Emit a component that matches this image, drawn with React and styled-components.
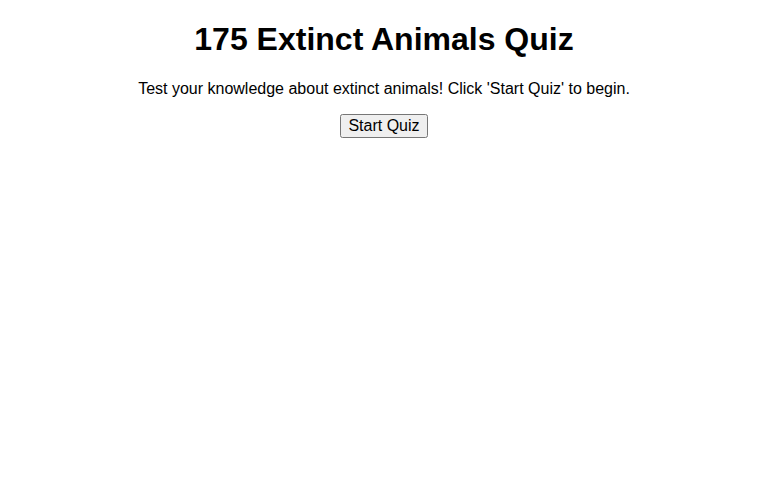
import styled, { createGlobalStyle } from "styled-components"

const GlobalStyle = createGlobalStyle`
	body {
		margin: 0 8px 8px;
		font-family: "Liberation Sans", Arial, sans-serif;
		background: #fff;
		color: #000;
	}
`

const Quiz = styled.div`
	text-align: center;
`

const Title = styled.h1`
	font-size: 2em;
	font-weight: bold;
	margin: 0.67em 0;
`

const Intro = styled.p`
	font-size: 16px;
	margin: 16px 0;
`

const StartButton = styled.button`
	font-family: "Liberation Sans", Arial, sans-serif;
	font-size: 16px;
	color: #000;
	padding: 1px 6px;
`

export default function App() {
	return (
		<>
			<GlobalStyle />
			<Quiz>
				<Title>175 Extinct Animals Quiz</Title>
				<Intro>
					Test your knowledge about extinct animals! Click 'Start Quiz' to begin.
				</Intro>
				<StartButton>Start Quiz</StartButton>
			</Quiz>
		</>
	)
}
